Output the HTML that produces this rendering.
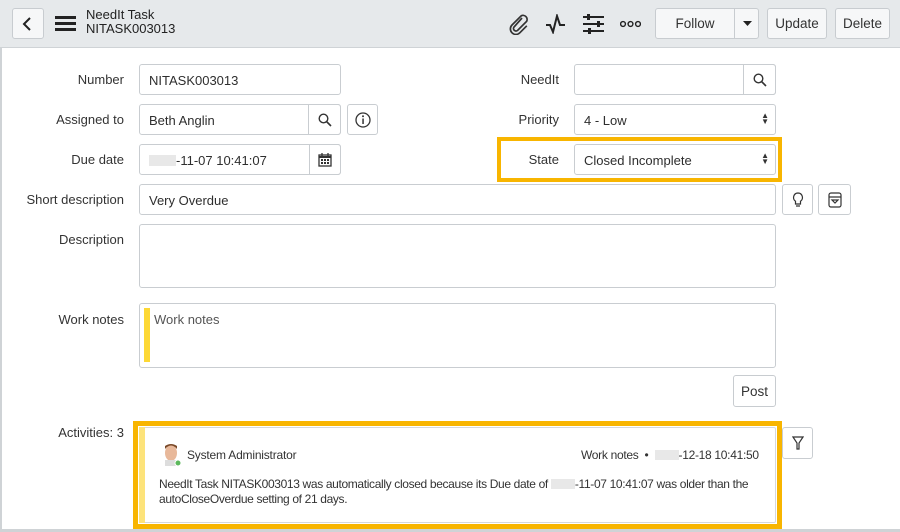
<!DOCTYPE html>
<html><head><meta charset="utf-8"><style>
*{box-sizing:border-box;margin:0;padding:0}
body{width:900px;height:532px;overflow:hidden;background:#fff;font-family:"Liberation Sans",sans-serif;color:#2e2e2e;position:relative;font-size:13px}
.a{position:absolute}
.hdr{left:0;top:0;width:900px;height:48px;background:#e6e9eb;border-bottom:1px solid #cfd3d6}
.btn{position:absolute;background:#f6f7f8;border:1px solid #c8ccd0;border-radius:3px;display:flex;align-items:center;justify-content:center;font-size:13.5px;color:#333}
.in{position:absolute;background:#fff;border:1px solid #c9cdd1;border-radius:3px;height:31px;font-size:13px;padding:8px 9px;white-space:nowrap}
.lbl{position:absolute;width:124px;left:0;text-align:right;font-size:13px;color:#333}
.lbl2{position:absolute;width:559px;left:0;text-align:right;font-size:13px;color:#333}
.seg{position:absolute;top:-1px;bottom:-1px;right:-1px;width:33px;border:1px solid #c9cdd1;border-radius:0 3px 3px 0;display:flex;align-items:center;justify-content:center}
.sq{position:absolute;border:1px solid #c9cdd1;border-radius:3px;background:#fff;display:flex;align-items:center;justify-content:center}
.arr{position:absolute;right:6px;top:8px;font-size:8px;line-height:6px;color:#333}
.blur{display:inline-block;width:27px;height:11px;background:#e8e8e8;vertical-align:-1px}
</style></head><body>
<div class="a" style="left:0;top:0;width:2px;height:532px;background:#cfd3d6"></div>
<div class="a" style="left:0;top:529px;width:900px;height:3px;background:#cfd3d6"></div>
<div class="a hdr"></div>
<div class="btn" style="left:12px;top:8px;width:32px;height:31px"><svg width="12" height="14" viewBox="0 0 12 14"><path d="M8 1L2 7l6 6" stroke="#222" stroke-width="2" fill="none"/></svg></div>
<svg class="a" style="left:55px;top:16px" width="21" height="16"><rect y="0" width="21" height="3" fill="#222"/><rect y="6" width="21" height="3" fill="#222"/><rect y="12" width="21" height="3" fill="#222"/></svg>
<div class="a" style="left:86px;top:8px;font-size:13px;line-height:14px;color:#222">NeedIt Task<br>NITASK003013</div>
<svg class="a" style="left:508px;top:13px" width="22" height="22" viewBox="0 0 22 22"><path d="M14 5l-8 9a2.5 2.5 0 0 0 3.5 3.5l9-9a4 4 0 0 0-5.5-5.5l-9 9a5.5 5.5 0 0 0 7.8 7.8l7-7" stroke="#333" stroke-width="1.7" fill="none"/></svg>
<svg class="a" style="left:545px;top:14px" width="22" height="20"><path d="M1 11h4l3 7 4-16 3 9h5" stroke="#222" stroke-width="2" fill="none"/></svg>
<svg class="a" style="left:583px;top:14px" width="21" height="20"><path d="M0 3h21M0 10h21M0 17h21" stroke="#222" stroke-width="2"/><rect x="4" y="0" width="3" height="6" fill="#222"/><rect x="14" y="7" width="3" height="6" fill="#222"/><rect x="5" y="14" width="3" height="6" fill="#222"/></svg>
<svg class="a" style="left:620px;top:20px" width="21" height="8"><circle cx="3" cy="4" r="2.4" stroke="#222" stroke-width="1.4" fill="none"/><circle cx="10.5" cy="4" r="2.4" stroke="#222" stroke-width="1.4" fill="none"/><circle cx="18" cy="4" r="2.4" stroke="#222" stroke-width="1.4" fill="none"/></svg>
<div class="btn" style="left:655px;top:8px;width:104px;height:31px;justify-content:flex-start"><span style="width:78px;text-align:center">Follow</span><span style="position:absolute;left:78px;top:0;bottom:0;border-left:1px solid #c8ccd0;width:25px;display:flex;align-items:center;justify-content:center"><svg width="9" height="5"><path d="M0 0h9L4.5 5z" fill="#222"/></svg></span></div>
<div class="btn" style="left:767px;top:8px;width:60px;height:31px">Update</div>
<div class="btn" style="left:835px;top:8px;width:55px;height:31px">Delete</div>

<div class="lbl" style="top:72px">Number</div>
<div class="in" style="left:139px;top:64px;width:202px">NITASK003013</div>
<div class="lbl" style="top:112px">Assigned to</div>
<div class="in" style="left:139px;top:104px;width:202px">Beth Anglin<div class="seg"><svg width="14" height="14"><circle cx="5.5" cy="5.5" r="4.3" stroke="#333" stroke-width="1.4" fill="none"/><path d="M8.5 8.5l4.5 4.5" stroke="#333" stroke-width="1.6"/></svg></div></div>
<div class="sq" style="left:347px;top:104px;width:31px;height:31px"><svg width="16" height="16"><circle cx="8" cy="8" r="7" stroke="#333" stroke-width="1.3" fill="none"/><rect x="7.3" y="6.5" width="1.5" height="5.5" fill="#333"/><circle cx="8" cy="4.3" r="1" fill="#333"/></svg></div>
<div class="lbl" style="top:152px">Due date</div>
<div class="in" style="left:139px;top:144px;width:202px"><span class="blur"></span>-11-07 10:41:07<div class="seg" style="width:32px"><svg width="14" height="14"><rect x="1" y="2" width="12" height="11" stroke="#333" stroke-width="1.3" fill="none"/><path d="M1 4h12" stroke="#333" stroke-width="2"/><path d="M4 0v3M10 0v3" stroke="#333" stroke-width="1.3"/><g fill="#333"><rect x="3" y="6" width="2" height="2"/><rect x="6" y="6" width="2" height="2"/><rect x="9" y="6" width="2" height="2"/><rect x="3" y="9" width="2" height="2"/><rect x="6" y="9" width="2" height="2"/><rect x="9" y="9" width="2" height="2"/></g></svg></div></div>

<div class="lbl2" style="top:72px">NeedIt</div>
<div class="in" style="left:574px;top:64px;width:202px"><div class="seg"><svg width="14" height="14"><circle cx="5.5" cy="5.5" r="4.3" stroke="#333" stroke-width="1.4" fill="none"/><path d="M8.5 8.5l4.5 4.5" stroke="#333" stroke-width="1.6"/></svg></div></div>
<div class="lbl2" style="top:112px">Priority</div>
<div class="in" style="left:574px;top:104px;width:202px">4 - Low<div class="arr">▲<br>▼</div></div>
<div class="a" style="left:497px;top:137px;width:285px;height:45px;border:4px solid #f8b500"></div>
<div class="lbl2" style="top:152px">State</div>
<div class="in" style="left:574px;top:144px;width:202px">Closed Incomplete<div class="arr">▲<br>▼</div></div>

<div class="lbl" style="top:192px">Short description</div>
<div class="in" style="left:139px;top:184px;width:637px">Very Overdue</div>
<div class="sq" style="left:782px;top:184px;width:31px;height:31px"><svg width="12" height="16"><path d="M6 1a4.5 4.5 0 0 0-2.5 8.2V12h5V9.2A4.5 4.5 0 0 0 6 1zM4 14h4" stroke="#333" stroke-width="1.2" fill="none"/></svg></div>
<div class="sq" style="left:818px;top:184px;width:33px;height:31px"><svg width="14" height="16"><rect x="1" y="1" width="12" height="14" rx="2" stroke="#333" stroke-width="1.2" fill="none"/><path d="M1 5h12M4 8h6l-3 3z" stroke="#333" stroke-width="1.2" fill="none"/></svg></div>
<div class="lbl" style="top:232px">Description</div>
<div class="in" style="left:139px;top:224px;width:637px;height:64px"></div>
<div class="lbl" style="top:312px">Work notes</div>
<div class="in" style="left:139px;top:303px;width:637px;height:65px;padding:8px 14px;color:#555">Work notes</div>
<div class="a" style="left:144px;top:308px;width:6px;height:54px;background:#fdd835"></div>
<div class="btn" style="left:733px;top:375px;width:43px;height:32px;background:#fff">Post</div>

<div class="lbl" style="top:425px">Activities: 3</div>
<div class="a" style="left:133px;top:421px;width:649px;height:108px;border:5px solid #f8b500"></div>
<div class="a" style="left:139px;top:427px;width:637px;height:96px;border:1px solid #d5d8db;border-radius:2px"></div>
<div class="a" style="left:139px;top:427px;width:6px;height:96px;background:#fde37a"></div>
<div class="sq" style="left:782px;top:427px;width:31px;height:32px"><svg width="12" height="14"><path d="M1 1h10L7 7v6H5V7z" stroke="#333" stroke-width="1.2" fill="none"/></svg></div>
<svg class="a" style="left:161px;top:443px" width="22" height="24"><ellipse cx="10" cy="10" rx="6" ry="8" fill="#e8b89a"/><path d="M4 6q6-7 12 0v-3q-6-4-12 0z" fill="#7a4a2a"/><rect x="4" y="17" width="12" height="6" fill="#ddd"/><circle cx="17" cy="20" r="3" fill="#5cb85c" stroke="#fff"/></svg>
<div class="a" style="left:187px;top:448px;font-size:12px;color:#333;letter-spacing:-0.2px">System Administrator</div>
<div class="a" style="left:581px;top:448px;font-size:12px;color:#333;letter-spacing:-0.3px">Work notes &nbsp;•&nbsp; <span class="blur" style="width:24px;height:10px"></span>-12-18 10:41:50</div>
<div class="a" style="left:159px;top:477px;font-size:12px;line-height:15px;color:#333;width:610px;letter-spacing:-0.35px">NeedIt Task NITASK003013 was automatically closed because its Due date of <span class="blur" style="width:24px;height:10px"></span>-11-07 10:41:07 was older than the<br>autoCloseOverdue setting of 21 days.</div>
</body></html>
